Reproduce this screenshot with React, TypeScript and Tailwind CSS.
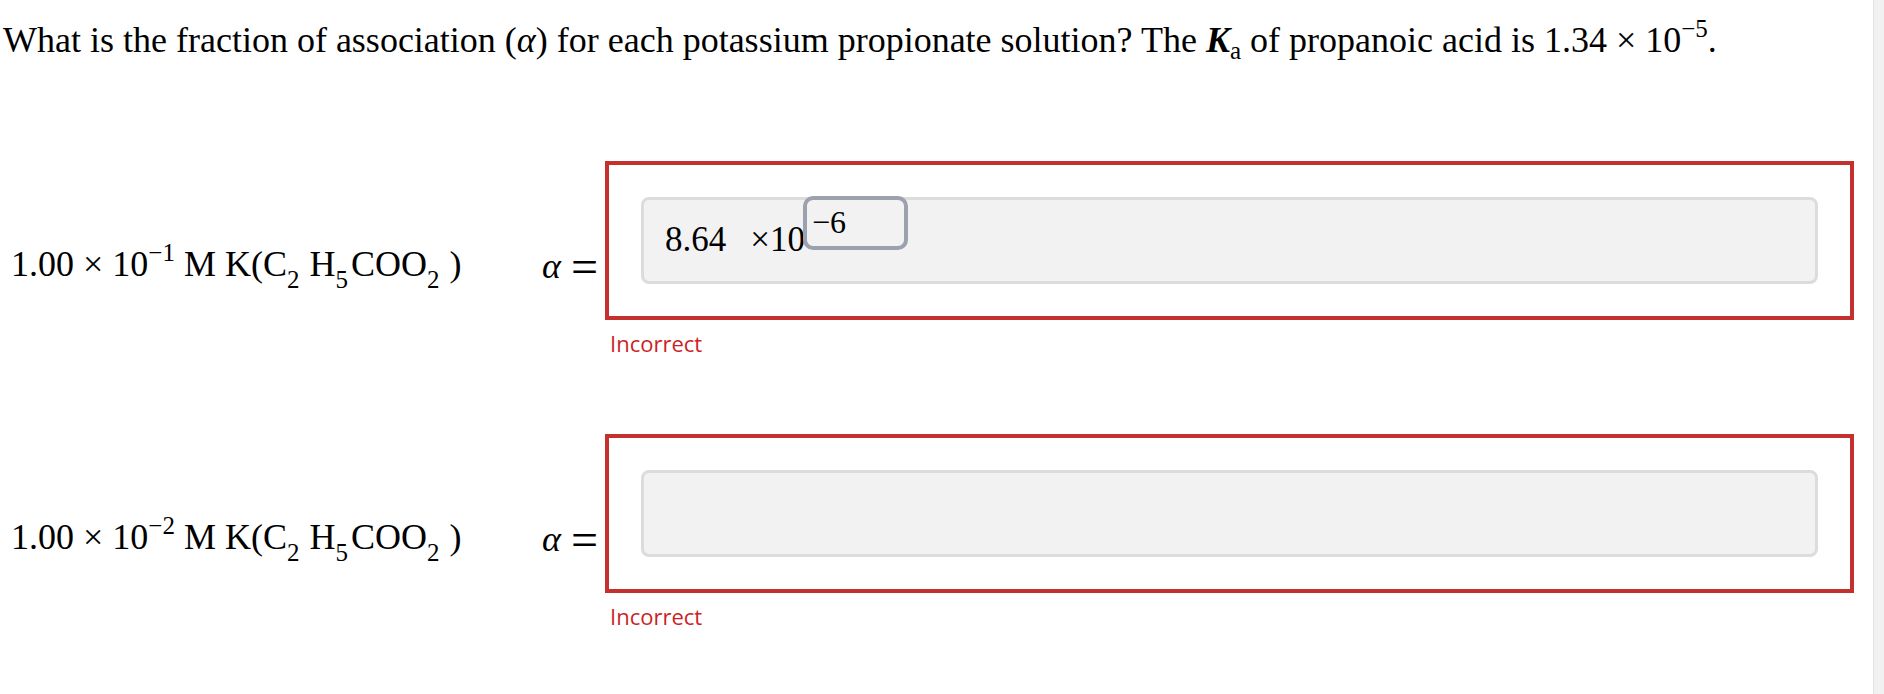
import React from "react";

const serif = "font-['Liberation_Serif','Times_New_Roman',serif]";

const Sub = ({ children, tight }: { children: React.ReactNode; tight?: boolean }) => (
  <span className={`relative top-[12px] text-[25px] ${tight ? "mr-[3px]" : "mr-[10px]"}`}>{children}</span>
);

const Sup = ({ children }: { children: React.ReactNode }) => (
  <span className="relative -top-[15px] text-[25px]">{children}</span>
);

interface RowProps {
  exp: string;
  value?: string;
  power?: string;
  first?: boolean;
}

const AnswerRow: React.FC<RowProps> = ({ exp, value, power, first }) => {
  return (
    <div className={`flex items-start pl-[11px] ${first ? "mt-[99px]" : "mt-[77px]"}`}>
      {/* formula label */}
      <div className="w-[531px] mt-[85px] text-[36px] leading-none whitespace-nowrap">
        1.00 × 10<Sup>−{exp}</Sup> M K(C<Sub>2</Sub>H<Sub tight>5</Sub>COO<Sub>2</Sub>)
      </div>

      <div className="w-[63px] mt-[77px] text-[36px] leading-none whitespace-nowrap">
        <span className="italic">α</span>
        <span className="relative top-[5px] ml-[10px] text-[48px]">=</span>
      </div>

      <div className="flex flex-col">
        <div className="w-[1249px] border-4 border-[#c3302d] p-[32px]">
          <div className="h-[87px] rounded-[8px] border-[3px] border-[#dcdcdc] bg-[#f2f2f2] flex items-start pl-[21px]">
            {value && (
              <>
                <span className="mt-[22px] text-[35px] leading-none">{value}</span>
                <span className="mt-[22px] ml-[24px] text-[35px] leading-none">×10</span>
                <div className="-mt-[4px] -ml-[2px] w-[105px] h-[54px] rounded-[10px] border-4 border-[#9ca2ad] bg-[#f2f2f2] pl-[5px] pt-[6px] text-[32px] leading-none">
                  {power}
                </div>
              </>
            )}
          </div>
        </div>
        <div className="mt-[9px] pl-[5px] font-['Open_Sans',sans-serif] text-[22px] leading-[28px] text-[#cc1f27]">
          Incorrect
        </div>
      </div>
    </div>
  );
};

export default function App() {
  return (
    <div className={`flex w-[1884px] h-[694px] bg-white text-black ${serif}`}>
      <div className="flex-1 flex flex-col">
        <p className="pt-[22px] pl-[3px] text-[36px] leading-[36px] whitespace-nowrap">
          What is the fraction of association (<span className="italic">α</span>) for each potassium propionate
          solution? The <span className="italic font-bold">K</span>
          <span className="relative top-[7px] text-[25px]">a</span> of propanoic acid is 1.34 × 10
          <Sup>−5</Sup>.
        </p>

        <AnswerRow first exp="1" value="8.64" power="−6" />
        <AnswerRow exp="2" />
      </div>

      {/* page scrollbar */}
      <div className="w-[11px] bg-[#f1f1f1] border-l border-[#e2e2e2]" />
    </div>
  );
}
